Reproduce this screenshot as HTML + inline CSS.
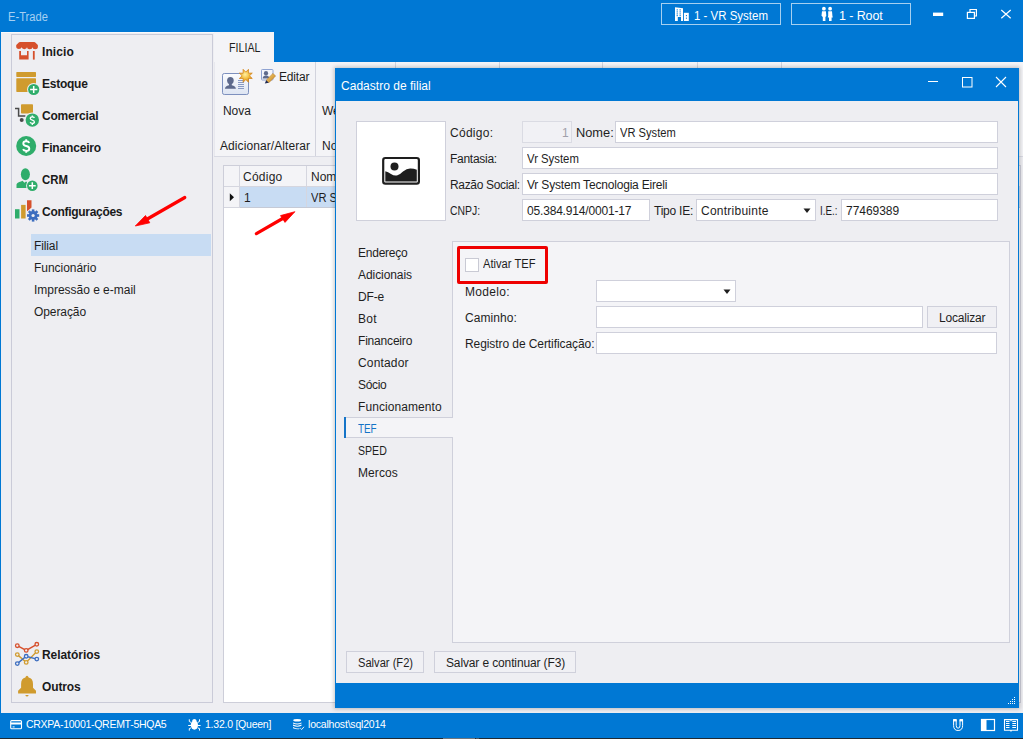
<!DOCTYPE html>
<html><head><meta charset="utf-8">
<style>
*{box-sizing:border-box;margin:0;padding:0}
html,body{width:1023px;height:739px;overflow:hidden;background:#0078D4;font-family:"Liberation Sans",sans-serif;font-size:12px;color:#1E1E1E}
.a{position:absolute}
.t{position:absolute;white-space:nowrap;line-height:1}
</style></head><body>
<!-- title bar -->

<!-- client area -->
<div class="a" style="left:1px;top:32px;width:1022px;height:681px;background:#EEEEF2"></div>
<div class="a" style="left:1px;top:32px;width:213px;height:1px;background:#FAFAFC"></div>
<!-- ribbon tab row (blue) -->
<div class="a" style="left:274px;top:32px;width:749px;height:30px;background:#0078D4"></div>
<div class="a" style="left:214px;top:32px;width:60px;height:30px;background:#F4F4F7"></div>

<!-- left panel -->
<div class="a" style="left:11px;top:34px;width:202px;height:669px;border:1px solid #CACBD8"></div>


<!-- left nav items -->
<svg class="a" style="left:0;top:0" width="214" height="713" viewBox="0 0 214 713">
 <!-- Inicio shop -->
 <g fill="#D6502C">
  <path d="M19.8 42 H34.3 Q34.9 42 35.3 42.4 L37.6 44.8 Q37.9 45.1 37.9 45.6 V47.3 A2.72 2.0 0 0 1 32.46 47.3 A2.72 2.0 0 0 1 27.02 47.3 A2.72 2.0 0 0 1 21.6 47.3 A2.72 2.0 0 0 1 16.2 47.3 V45.6 Q16.2 45.1 16.5 44.8 L18.8 42.4 Q19.2 42 19.8 42Z"/>
  <path d="M19.2 51 H21 V55.2 H27 V51 H28.6 V59.6 H19.2Z"/>
  <rect x="32.9" y="51" width="1.8" height="8.6"/>
 </g>
 <!-- Estoque -->
 <g fill="#D09B2E">
  <rect x="16.3" y="72.1" width="19.7" height="4.8" rx="0.6"/>
  <rect x="16.3" y="78.2" width="19.7" height="13.7" rx="0.6"/>
 </g>
 <circle cx="33.7" cy="89.5" r="6.6" fill="#EEEEF2"/>
 <circle cx="33.7" cy="89.5" r="5.6" fill="#2FAD6B"/>
 <path d="M33.7 85.9 V93.1 M30.1 89.5 H37.3" stroke="#fff" stroke-width="1.5"/>
 <!-- Comercial -->
 <rect x="21" y="104.3" width="12" height="9.2" rx="0.8" fill="#D09B2E"/>
 <path d="M15 108.5 H18.6 V116 H25.4" fill="none" stroke="#4A4A4A" stroke-width="1.5"/>
 <circle cx="21.7" cy="120.1" r="2" fill="#4A4A4A"/>
 <circle cx="32.3" cy="120.1" r="7.6" fill="#EEEEF2"/>
 <circle cx="32.3" cy="120.1" r="6.7" fill="#2FAD6B"/>
 <path d="M34.4 117.9 Q33.9 116.9 32.3 116.9 Q30.3 116.9 30.3 118.5 Q30.3 119.6 32.3 120.1 Q34.4 120.6 34.4 122 Q34.4 123.4 32.3 123.4 Q30.6 123.4 30.1 122.3 M32.3 115.4 V117 M32.3 123.3 V124.9" fill="none" stroke="#fff" stroke-width="1.3"/>
 <!-- Financeiro -->
 <circle cx="26.2" cy="146" r="10" fill="#2FAD6B"/>
 <path d="M29.3 142.9 Q28.5 141.2 26.2 141.2 Q23.3 141.2 23.3 143.5 Q23.3 145.3 26.2 146 Q29.3 146.7 29.3 148.7 Q29.3 150.9 26.2 150.9 Q23.7 150.9 23 149.2 M26.2 139.3 V141.4 M26.2 150.7 V152.8" fill="none" stroke="#fff" stroke-width="1.9"/>
 <!-- CRM -->
 <g fill="#2FAD6B">
  <ellipse cx="25.4" cy="174.3" rx="4.5" ry="6"/>
  <path d="M16.5 188 V184.5 Q17 182.5 21 181.5 L22.5 180.8 L24.5 182.8 L26 181.6 L27 182 V188Z"/>
 </g>
 <circle cx="32.3" cy="185.7" r="6.2" fill="#EEEEF2"/>
 <circle cx="32.3" cy="185.7" r="5.3" fill="#2FAD6B"/>
 <path d="M32.3 182.3 V189.1 M28.9 185.7 H35.7" stroke="#fff" stroke-width="1.5"/>
 <!-- Configuracoes -->
 <rect x="15" y="209.2" width="4.5" height="9.3" fill="#2FAD6B"/>
 <rect x="21.1" y="204.9" width="4.5" height="13.6" fill="#D09B2E"/>
 <path d="M27 200.3 H31.5 V207.5 L27.5 211 H27Z" fill="#D6502C"/>
 <g transform="translate(33.1 215.5)" fill="#3C6DBF">
  <circle r="4.4"/>
  <g id="teeth"><rect x="-1.3" y="-6.1" width="2.6" height="12.2"/><rect x="-6.1" y="-1.3" width="12.2" height="2.6"/><rect x="-1.3" y="-6.1" width="2.6" height="12.2" transform="rotate(45)"/><rect x="-6.1" y="-1.3" width="12.2" height="2.6" transform="rotate(45)"/></g>
  <circle r="1.6" fill="#EEEEF2"/>
 </g>
 <!-- Relatorios -->
 <g fill="none" stroke-width="1.4">
  <polyline points="17.3,645.7 26.2,650.4 36.8,644.3" stroke="#D6502C"/>
  <polyline points="17.3,654.6 26.2,662.4 36.8,651.6" stroke="#D09B2E"/>
  <polyline points="17.3,663.6 26.2,656.3 36.8,659.1" stroke="#3C6DBF"/>
 </g>
 <g stroke-width="1.3" fill="#EEEEF2">
  <circle cx="17.3" cy="645.7" r="1.8" stroke="#D6502C"/><circle cx="26.2" cy="650.4" r="1.8" stroke="#D6502C"/><circle cx="36.8" cy="644.3" r="1.8" stroke="#D6502C"/>
  <circle cx="17.3" cy="654.6" r="1.8" stroke="#D09B2E"/><circle cx="26.2" cy="662.4" r="1.8" stroke="#D09B2E"/><circle cx="36.8" cy="651.6" r="1.8" stroke="#D09B2E"/>
  <circle cx="17.3" cy="663.6" r="1.8" stroke="#3C6DBF"/><circle cx="26.2" cy="656.3" r="1.8" stroke="#3C6DBF"/><circle cx="36.8" cy="659.1" r="1.8" stroke="#3C6DBF"/>
 </g>
 <!-- Outros bell -->
 <path d="M27 675.8 Q28.2 675.8 28.6 677.6 Q33 678.6 33 684 V687.8 L36 690.8 V693.5 H18.1 V690.8 L21.1 687.8 V684 Q21.1 678.6 25.4 677.6 Q25.8 675.8 27 675.8Z" fill="#D09B2E"/>
 <path d="M25.3 695 H28.7 Q28.2 696.5 27 696.5 Q25.8 696.5 25.3 695Z" fill="#D09B2E"/>
</svg>
<div class="a" style="left:31px;top:234px;width:180px;height:22px;background:#C8DCF3"></div>


<!-- ribbon -->
<div class="a" style="left:214px;top:62px;width:809px;height:95px;background:#F4F4F7;border-bottom:1px solid #D9DAE3"></div>
<div class="a" style="left:214px;top:62px;width:1px;height:94px;background:#E8E8EE"></div>
<div class="a" style="left:315px;top:62px;width:1px;height:94px;background:#D2D3DD"></div>
<div class="a" style="left:395px;top:62px;width:1px;height:94px;background:#D2D3DD"></div>
<div class="a" style="left:499px;top:62px;width:1px;height:94px;background:#D2D3DD"></div>
<div class="a" style="left:602px;top:62px;width:1px;height:94px;background:#D2D3DD"></div>
<div class="a" style="left:697px;top:62px;width:1px;height:94px;background:#D2D3DD"></div>
<div class="a" style="left:781px;top:62px;width:1px;height:94px;background:#D2D3DD"></div>
<svg class="a" style="left:0;top:0" width="320" height="100" viewBox="0 0 320 100">
 <defs>
  <linearGradient id="cardg" x1="0" y1="0" x2="0" y2="1"><stop offset="0" stop-color="#FBFCFE"/><stop offset="1" stop-color="#DDE4F2"/></linearGradient>
  <radialGradient id="starg" cx="0.45" cy="0.4" r="0.6"><stop offset="0" stop-color="#FFF0A0"/><stop offset="0.6" stop-color="#F2B935"/><stop offset="1" stop-color="#D98A1E"/></radialGradient>
  <linearGradient id="pencg" x1="0" y1="0" x2="1" y2="1"><stop offset="0" stop-color="#F7D77A"/><stop offset="1" stop-color="#C27A16"/></linearGradient>
 </defs>
 <rect x="222.5" y="73.5" width="26" height="21" rx="1.8" fill="url(#cardg)" stroke="#7D90BE" stroke-width="1"/>
 <g fill="#5E6A8C">
  <ellipse cx="230.4" cy="80.6" rx="3.3" ry="3.6"/>
  <path d="M229 83.5 H231.8 V85.2 Q235.6 85.8 235.9 88.8 H224.9 Q225.2 85.8 229 85.2Z"/>
 </g>
 <g fill="#7D90BE"><rect x="238" y="80" width="6" height="0.9"/><rect x="238" y="82" width="6" height="0.9"/><rect x="238" y="84" width="6" height="0.9"/><rect x="238" y="86" width="6" height="0.9"/><rect x="238" y="88" width="6" height="0.9"/></g>
 <path d="M248.48,69.33 L248.42,73.18 L252.27,73.12 L249.50,75.80 L252.27,78.48 L248.42,78.42 L248.48,82.27 L245.80,79.50 L243.12,82.27 L243.18,78.42 L239.33,78.48 L242.10,75.80 L239.33,73.12 L243.18,73.18 L243.12,69.33 L245.80,72.10Z" fill="url(#starg)" stroke="#D38620" stroke-width="0.8"/>
 <!-- editar -->
 <rect x="261.5" y="69.5" width="11.5" height="10.5" rx="0.8" fill="#F3F5FB" stroke="#8EA2D2" stroke-width="1"/>
 <g fill="#5E6A8C"><ellipse cx="266" cy="73.3" rx="2.1" ry="2.3"/><path d="M262.6 78.5 Q262.8 75.8 266 75.6 Q269.2 75.8 269.4 78.5Z"/></g>
 <path d="M266.2 80.2 L273 73.4 L275.6 76 L268.8 82.8 Z" fill="url(#pencg)" stroke="#B27018" stroke-width="0.5"/>
 <path d="M266.2 80.2 L268.8 82.8 L264.8 83.6Z" fill="#1E2A55"/>
</svg>

<!-- grid -->
<div class="a" style="left:223px;top:165px;width:798px;height:538px;background:#fff;border:1px solid #CDCED9"></div>
<div class="a" style="left:224px;top:166px;width:796px;height:21px;background:#F4F4F7;border-bottom:1px solid #D5D6DF"></div>
<div class="a" style="left:224px;top:187px;width:16px;height:21px;background:#F4F4F7;border-bottom:1px solid #D5D6DF;border-right:1px solid #D5D6DF"></div>
<div class="a" style="left:239px;top:166px;width:1px;height:21px;background:#D5D6DF"></div>
<div class="a" style="left:240px;top:187px;width:780px;height:21px;background:#C8DCF3;border-bottom:1px solid #C5CAD6"></div>
<div class="a" style="left:306px;top:166px;width:1px;height:41px;background:#D5D6DF"></div>
<svg class="a" style="left:229px;top:193px" width="6" height="9"><path d="M0.8 0.3 L5 4.3 L0.8 8.3Z" fill="#111"/></svg>

<div class="t" style="left:8px;top:11px;font-size:12px;color:#A6D0F2;transform:scaleX(0.929);transform-origin:0 0;">E-Trade</div>
<div class="t" style="left:229px;top:42px;font-size:12px;color:#1E1E1E;transform:scaleX(0.891);transform-origin:0 0;">FILIAL</div>
<div class="t" style="left:42px;top:46px;font-size:12px;color:#1A1A1A;font-weight:700;letter-spacing:0.08px;">Inicio</div>
<div class="t" style="left:42px;top:78px;font-size:12px;color:#1A1A1A;font-weight:700;letter-spacing:-0.25px;">Estoque</div>
<div class="t" style="left:42px;top:110px;font-size:12px;color:#1A1A1A;font-weight:700;letter-spacing:-0.19px;">Comercial</div>
<div class="t" style="left:42px;top:142px;font-size:12px;color:#1A1A1A;font-weight:700;letter-spacing:-0.17px;">Financeiro</div>
<div class="t" style="left:42px;top:174px;font-size:12px;color:#1A1A1A;font-weight:700;transform:scaleX(0.952);transform-origin:0 0;">CRM</div>
<div class="t" style="left:42px;top:206px;font-size:12px;color:#1A1A1A;font-weight:700;letter-spacing:-0.29px;">Configurações</div>
<div class="t" style="left:34px;top:240px;font-size:12px;color:#1E1E1E;letter-spacing:-0.12px;">Filial</div>
<div class="t" style="left:34px;top:262px;font-size:12px;color:#1E1E1E;letter-spacing:-0.04px;">Funcionário</div>
<div class="t" style="left:34px;top:284px;font-size:12px;color:#1E1E1E;letter-spacing:-0.02px;">Impressão e e-mail</div>
<div class="t" style="left:34px;top:306px;font-size:12px;color:#1E1E1E;letter-spacing:-0.09px;">Operação</div>
<div class="t" style="left:42px;top:649px;font-size:12px;color:#1A1A1A;font-weight:700;letter-spacing:-0.06px;">Relatórios</div>
<div class="t" style="left:42px;top:681px;font-size:12px;color:#1A1A1A;font-weight:700;letter-spacing:-0.12px;">Outros</div>
<div class="t" style="left:279px;top:71px;font-size:12px;color:#1E1E1E;letter-spacing:-0.18px;">Editar</div>
<div class="t" style="left:223px;top:105px;font-size:12px;color:#1E1E1E;letter-spacing:-0.07px;">Nova</div>
<div class="t" style="left:322px;top:105px;font-size:12px;color:#1E1E1E;">We</div>
<div class="t" style="left:220px;top:140px;font-size:12px;color:#1E1E1E;letter-spacing:0.08px;">Adicionar/Alterar</div>
<div class="t" style="left:322px;top:140px;font-size:12px;color:#1E1E1E;">No</div>
<div class="t" style="left:243px;top:171px;font-size:12px;color:#1E1E1E;letter-spacing:0.24px;">Código</div>
<div class="t" style="left:311px;top:171px;font-size:12px;color:#1E1E1E;">Nome</div>
<div class="t" style="left:244px;top:192px;font-size:12px;color:#1E1E1E;">1</div>
<div class="t" style="left:311px;top:192px;font-size:12px;color:#1E1E1E;transform:scaleX(0.929);transform-origin:0 0;">VR System</div>
<!-- status bar -->
<div class="a" style="left:0;top:713px;width:1023px;height:25px;background:#0078D4"></div>
<div class="a" style="left:0;top:738px;width:1023px;height:1px;background:#1F2A33"></div>
<div class="a" style="left:443px;top:738px;width:32px;height:1px;background:#70767C"></div><div class="a" style="left:476px;top:738px;width:3px;height:1px;background:#50565C"></div>

<!-- dialog -->
<div class="a" style="left:335px;top:68px;width:684px;height:640px;background:#0078D4;box-shadow:0 0 4px 1px rgba(0,0,0,0.22)"></div>
<div class="a" style="left:336px;top:101px;width:682px;height:582px;background:#EEEEF2"></div>
<svg class="a" style="left:920px;top:70px" width="95" height="25" viewBox="920 70 95 25">
 <path d="M928 81.5 H938" stroke="#fff" stroke-width="1"/>
 <rect x="962.5" y="77.5" width="9.5" height="9.5" fill="none" stroke="#fff" stroke-width="1"/>
 <path d="M996 77 L1006 87 M1006 77 L996 87" stroke="#fff" stroke-width="1.1"/>
</svg>
<!-- resize grip -->
<svg class="a" style="left:1005px;top:694px" width="12" height="12"><g fill="#fff"><rect x="9" y="3" width="1" height="1"/><rect x="9" y="5" width="1" height="1"/><rect x="7" y="5" width="1" height="1"/><rect x="9" y="7" width="1" height="1"/><rect x="7" y="7" width="1" height="1"/><rect x="5" y="7" width="1" height="1"/><rect x="9" y="9" width="1" height="1"/><rect x="7" y="9" width="1" height="1"/><rect x="5" y="9" width="1" height="1"/><rect x="3" y="9" width="1" height="1"/></g></svg>

<!-- image box -->
<div class="a" style="left:356px;top:121px;width:90px;height:100px;background:#fff;border:1px solid #CFD0DB"></div>
<svg class="a" style="left:380px;top:155px" width="42" height="32" viewBox="380 155 42 32">
 <rect x="383.2" y="158" width="35.7" height="25.6" rx="2.2" fill="none" stroke="#1E1E1E" stroke-width="2.2"/>
 <circle cx="394.5" cy="166.5" r="4" fill="#1E1E1E"/>
 <path d="M385.3 171.2 Q388 171.8 391 174 Q394.5 176.2 397.5 175.2 Q400 174.5 403 171.5 Q407 168.3 410.5 168.5 Q414 168.6 416.8 169.7 V181.6 H385.3Z" fill="#1E1E1E"/>
</svg>
<div class="a" style="left:522px;top:121px;width:50px;height:22px;background:#F1F1F5;border:1px solid #DADBE3"></div>
<div class="a" style="left:615px;top:121px;width:383px;height:22px;background:#fff;border:1px solid #CFD0DB"></div>
<div class="a" style="left:522px;top:147px;width:476px;height:22px;background:#fff;border:1px solid #CFD0DB"></div>
<div class="a" style="left:522px;top:173px;width:476px;height:22px;background:#fff;border:1px solid #CFD0DB"></div>
<div class="a" style="left:522px;top:199px;width:128px;height:22px;background:#fff;border:1px solid #CFD0DB"></div>
<div class="a" style="left:696px;top:199px;width:120px;height:22px;background:#fff;border:1px solid #CFD0DB"></div>
<svg class="a" style="left:803px;top:208px" width="9" height="6"><path d="M0.5 0.5 H7.5 L4 5Z" fill="#1E1E1E"/></svg>
<div class="a" style="left:841px;top:199px;width:157px;height:22px;background:#fff;border:1px solid #CFD0DB"></div>

<!-- tabs + content panel -->
<div class="a" style="left:452px;top:241px;width:558px;height:402px;background:#F4F4F7;border:1px solid #CFD0DB"></div>
<div class="a" style="left:344px;top:417px;width:109px;height:21px;background:#F4F4F7;border-top:1px solid #CFD0DB;border-bottom:1px solid #CFD0DB"></div>
<div class="a" style="left:344px;top:417px;width:2px;height:21px;background:#1574C8"></div>

<div class="a" style="left:457px;top:246px;width:91px;height:38px;border:3px solid #EE0000;border-radius:2px"></div>
<div class="a" style="left:465px;top:258px;width:14px;height:14px;background:#fff;border:1px solid #C9CAD4"></div>
<div class="a" style="left:596px;top:280px;width:140px;height:22px;background:#fff;border:1px solid #CFD0DB"></div>
<svg class="a" style="left:723px;top:289px" width="9" height="6"><path d="M0.5 0.5 H7.5 L4 5Z" fill="#1E1E1E"/></svg>
<div class="a" style="left:596px;top:306px;width:327px;height:22px;background:#fff;border:1px solid #CFD0DB"></div>
<div class="a" style="left:927px;top:306px;width:70px;height:22px;background:#F0F0F4;border:1px solid #CFD0DB"></div>
<div class="a" style="left:596px;top:332px;width:401px;height:22px;background:#fff;border:1px solid #CFD0DB"></div>

<!-- footer buttons -->
<div class="a" style="left:346px;top:651px;width:78px;height:22px;background:#F0F0F4;border:1px solid #CFD0DB"></div>
<div class="a" style="left:434px;top:651px;width:142px;height:22px;background:#F0F0F4;border:1px solid #CFD0DB"></div>

<div class="t" style="left:341px;top:80px;font-size:12px;color:#FFFFFF;letter-spacing:0.02px;">Cadastro de filial</div>
<div class="t" style="left:450px;top:127px;font-size:12px;color:#1E1E1E;letter-spacing:0.28px;">Código:</div>
<div class="t" style="left:450px;top:153px;font-size:12px;color:#1E1E1E;letter-spacing:-0.28px;">Fantasia:</div>
<div class="t" style="left:450px;top:179px;font-size:12px;color:#1E1E1E;letter-spacing:-0.33px;">Razão Social:</div>
<div class="t" style="left:450px;top:205px;font-size:12px;color:#1E1E1E;transform:scaleX(0.867);transform-origin:0 0;">CNPJ:</div>
<div class="t" style="left:562px;top:127px;font-size:12px;color:#A0A0AA;">1</div>
<div class="t" style="left:576px;top:127px;font-size:12px;color:#1E1E1E;transform:scaleX(1.067);transform-origin:0 0;">Nome:</div>
<div class="t" style="left:620px;top:127px;font-size:12px;color:#1E1E1E;transform:scaleX(0.929);transform-origin:0 0;">VR System</div>
<div class="t" style="left:527px;top:153px;font-size:12px;color:#1E1E1E;transform:scaleX(0.944);transform-origin:0 0;">Vr System</div>
<div class="t" style="left:527px;top:179px;font-size:12px;color:#1E1E1E;letter-spacing:-0.19px;">Vr System Tecnologia Eireli</div>
<div class="t" style="left:527px;top:205px;font-size:12px;color:#1E1E1E;letter-spacing:-0.18px;">05.384.914/0001-17</div>
<div class="t" style="left:654px;top:205px;font-size:12px;color:#1E1E1E;letter-spacing:-0.23px;">Tipo IE:</div>
<div class="t" style="left:701px;top:205px;font-size:12px;color:#1E1E1E;letter-spacing:0.25px;">Contribuinte</div>
<div class="t" style="left:820px;top:205px;font-size:12px;color:#1E1E1E;transform:scaleX(0.816);transform-origin:0 0;">I.E.:</div>
<div class="t" style="left:846px;top:205px;font-size:12px;color:#1E1E1E;letter-spacing:-0.04px;">77469389</div>
<div class="t" style="left:358px;top:247px;font-size:12px;color:#1E1E1E;letter-spacing:-0.24px;">Endereço</div>
<div class="t" style="left:358px;top:269px;font-size:12px;color:#1E1E1E;letter-spacing:-0.07px;">Adicionais</div>
<div class="t" style="left:358px;top:291px;font-size:12px;color:#1E1E1E;letter-spacing:-0.17px;">DF-e</div>
<div class="t" style="left:358px;top:313px;font-size:12px;color:#1E1E1E;letter-spacing:0.25px;">Bot</div>
<div class="t" style="left:358px;top:335px;font-size:12px;color:#1E1E1E;letter-spacing:-0.19px;">Financeiro</div>
<div class="t" style="left:358px;top:357px;font-size:12px;color:#1E1E1E;letter-spacing:0.17px;">Contador</div>
<div class="t" style="left:358px;top:379px;font-size:12px;color:#1E1E1E;letter-spacing:-0.33px;">Sócio</div>
<div class="t" style="left:358px;top:401px;font-size:12px;color:#1E1E1E;letter-spacing:0.08px;">Funcionamento</div>
<div class="t" style="left:358px;top:423px;font-size:12px;color:#1473C6;transform:scaleX(0.823);transform-origin:0 0;">TEF</div>
<div class="t" style="left:358px;top:445px;font-size:12px;color:#1E1E1E;transform:scaleX(0.881);transform-origin:0 0;">SPED</div>
<div class="t" style="left:358px;top:467px;font-size:12px;color:#1E1E1E;letter-spacing:0.08px;">Mercos</div>
<div class="t" style="left:483px;top:258px;font-size:12px;color:#1E1E1E;transform:scaleX(0.929);transform-origin:0 0;">Ativar TEF</div>
<div class="t" style="left:465px;top:286px;font-size:12px;color:#1E1E1E;letter-spacing:0.33px;">Modelo:</div>
<div class="t" style="left:465px;top:312px;font-size:12px;color:#1E1E1E;letter-spacing:0.07px;">Caminho:</div>
<div class="t" style="left:465px;top:338px;font-size:12px;color:#1E1E1E;letter-spacing:-0.08px;">Registro de Certificação:</div>
<div class="t" style="left:939px;top:312px;font-size:12px;color:#1E1E1E;letter-spacing:-0.19px;">Localizar</div>
<div class="t" style="left:358px;top:657px;font-size:12px;color:#1E1E1E;transform:scaleX(0.928);transform-origin:0 0;">Salvar (F2)</div>
<div class="t" style="left:446px;top:657px;font-size:12px;color:#1E1E1E;letter-spacing:-0.13px;">Salvar e continuar (F3)</div>
<!-- title bar buttons -->
<div class="a" style="left:661px;top:3px;width:120px;height:22px;border:1px solid rgba(255,255,255,0.65)"></div>
<div class="a" style="left:791px;top:3px;width:120px;height:22px;border:1px solid rgba(255,255,255,0.65)"></div>
<svg class="a" style="left:0;top:0" width="1023" height="30" viewBox="0 0 1023 30">
 <g fill="#fff">
  <path d="M675 7.2 L683 8.2 V21 H681 V17 H677.8 V21 H675Z"/>
  <rect x="683.9" y="12.8" width="4.9" height="8.2"/>
 </g>
 <g fill="#0078D4">
  <rect x="676.6" y="9.4" width="1.3" height="1"/><rect x="679.5" y="9.4" width="1.3" height="1"/>
  <rect x="676.6" y="11.4" width="1.3" height="1"/><rect x="679.5" y="11.4" width="1.3" height="1"/>
  <rect x="676.6" y="13.4" width="1.3" height="1"/><rect x="679.5" y="13.4" width="1.3" height="1"/>
  <rect x="676.6" y="15.2" width="1.3" height="1"/><rect x="679.5" y="15.2" width="1.3" height="1"/>
  <rect x="685.9" y="15" width="1" height="1.2"/><rect x="685.9" y="17.6" width="1" height="1.2"/>
 </g>
 <g fill="#fff">
  <circle cx="823.9" cy="8.7" r="1.9"/>
  <path d="M822 11.3 H825.9 L826.3 16 L825.4 17 V21 H822.8 V17 L821.5 15.7Z"/>
  <circle cx="830.1" cy="8.7" r="1.9"/>
  <path d="M828.2 11.3 H832 L832.4 15.7 L832.8 17.4 H831.6 V21 H829 V17.4 H827.8 L828.2 15.7Z"/>
 </g>
 <rect x="933" y="12.6" width="10.2" height="3.4" fill="#fff"/>
 <g fill="none" stroke="#fff" stroke-width="1.2">
  <rect x="967.4" y="12.4" width="7" height="6"/>
  <path d="M970 12.4 V9.5 H976.4 V16 H974.4"/>
 </g>
 <path d="M1001.3 10 L1010.7 18.3 M1010.7 10 L1001.3 18.3" stroke="#fff" stroke-width="1.2"/>
</svg>

<!-- status bar content -->
<svg class="a" style="left:0;top:713px" width="1023" height="25" viewBox="0 713 1023 25">
 <g fill="none" stroke="#fff" stroke-width="1.1">
  <rect x="10.7" y="720.6" width="10.8" height="8.2" rx="1"/>
 </g>
 <rect x="10.7" y="722.5" width="10.8" height="2" fill="#fff"/>
 <rect x="12.6" y="726.4" width="2" height="1" fill="#fff"/>
 <!-- bug -->
 <g fill="#fff"><ellipse cx="194.4" cy="725" rx="3.6" ry="4.7"/><ellipse cx="194.4" cy="720.6" rx="2" ry="1.6"/></g>
 <g stroke="#fff" stroke-width="1" fill="none">
  <path d="M189.3 719.3 V721.5 L191.2 722.5 M199.5 719.3 V721.5 L197.6 722.5"/>
  <path d="M188.2 725.5 H191 M197.8 725.5 H200.6"/>
  <path d="M189.3 730.6 V728.6 L191.2 727.8 M199.5 730.6 V728.6 L197.6 727.8"/>
 </g>
 <!-- db -->
 <g fill="#fff">
  <ellipse cx="297.2" cy="720.3" rx="4" ry="1.2"/>
  <path d="M293 722.4 Q297.2 724.6 301.5 722.4 V723.5 Q297.2 725.6 293 723.5Z"/>
  <path d="M293 724.6 Q297.2 726.8 301.5 724.6 V725.7 Q297.2 727.8 293 725.7Z"/>
  <path d="M293 727 Q297.2 729.2 299.5 728.2 V729 Q297.2 730 293 728.2Z"/>
 </g>
 <path d="M300.3 728.2 L301.7 729.5 L304 726.8" stroke="#fff" stroke-width="0.9" fill="none"/>
 <!-- right icons -->
 <path d="M953.6 719.6 H956.2 V725.4 Q956.2 728.2 958.1 728.2 Q960 728.2 960 725.4 V719.6 H962.6 V725.4 Q962.6 730.5 958.1 730.5 Q953.6 730.5 953.6 725.4 Z" fill="none" stroke="#fff" stroke-width="1"/>
 <rect x="953.2" y="719.2" width="3.4" height="2.2" fill="#fff"/><rect x="959.6" y="719.2" width="3.4" height="2.2" fill="#fff"/>
 <rect x="981.5" y="719.5" width="13" height="11" fill="none" stroke="#fff" stroke-width="1.2"/>
 <rect x="981.5" y="719.5" width="5" height="11" fill="#fff"/>
 <path d="M1004.5 719.6 H1010.6 L1011 720.4 L1011.4 719.6 H1017.5 V730.2 H1011.6 L1011 731 L1010.4 730.2 H1004.5Z" fill="none" stroke="#fff" stroke-width="1.1"/>
 
 <g stroke="#fff" stroke-width="1"><path d="M1006 721.5 H1009.5 M1006 723.5 H1009.5 M1006 725.5 H1009.5 M1006 727.5 H1009.5 M1012.3 721.5 H1016 M1012.3 723.5 H1016 M1012.3 725.5 H1016 M1012.3 727.5 H1016"/></g>
</svg>

<div class="t" style="left:694px;top:10px;font-size:12.5px;color:#FFFFFF;transform:scaleX(0.918);transform-origin:0 0;">1 - VR System</div>
<div class="t" style="left:839px;top:10px;font-size:12.5px;color:#FFFFFF;letter-spacing:-0.10px;">1 - Root</div>
<div class="t" style="left:26px;top:719px;font-size:10.5px;color:#FFFFFF;letter-spacing:-0.28px;">CRXPA-10001-QREMT-5HQA5</div>
<div class="t" style="left:205px;top:719px;font-size:10.5px;color:#FFFFFF;letter-spacing:-0.24px;">1.32.0 [Queen]</div>
<div class="t" style="left:308px;top:719px;font-size:10.5px;color:#FFFFFF;letter-spacing:-0.20px;">localhost\sql2014</div>
<!-- red arrows -->
<svg class="a" style="left:0;top:0" width="340" height="260" viewBox="0 0 340 260">
 <path d="M184.8 197.5 L143 221.5" stroke="#FF0000" stroke-width="3.2" stroke-linecap="round"/>
 <path d="M135.3 226 L145.5 215.5 L149.8 222.8Z" fill="#FF0000" stroke="#FF0000" stroke-width="0.8" stroke-linejoin="round"/>
 <path d="M256.4 233.6 L287 216" stroke="#FF0000" stroke-width="3.2" stroke-linecap="round"/>
 <path d="M294.9 211.7 L280.5 215.6 L285 222.4Z" fill="#FF0000" stroke="#FF0000" stroke-width="0.8" stroke-linejoin="round"/>
</svg>
</body></html>
